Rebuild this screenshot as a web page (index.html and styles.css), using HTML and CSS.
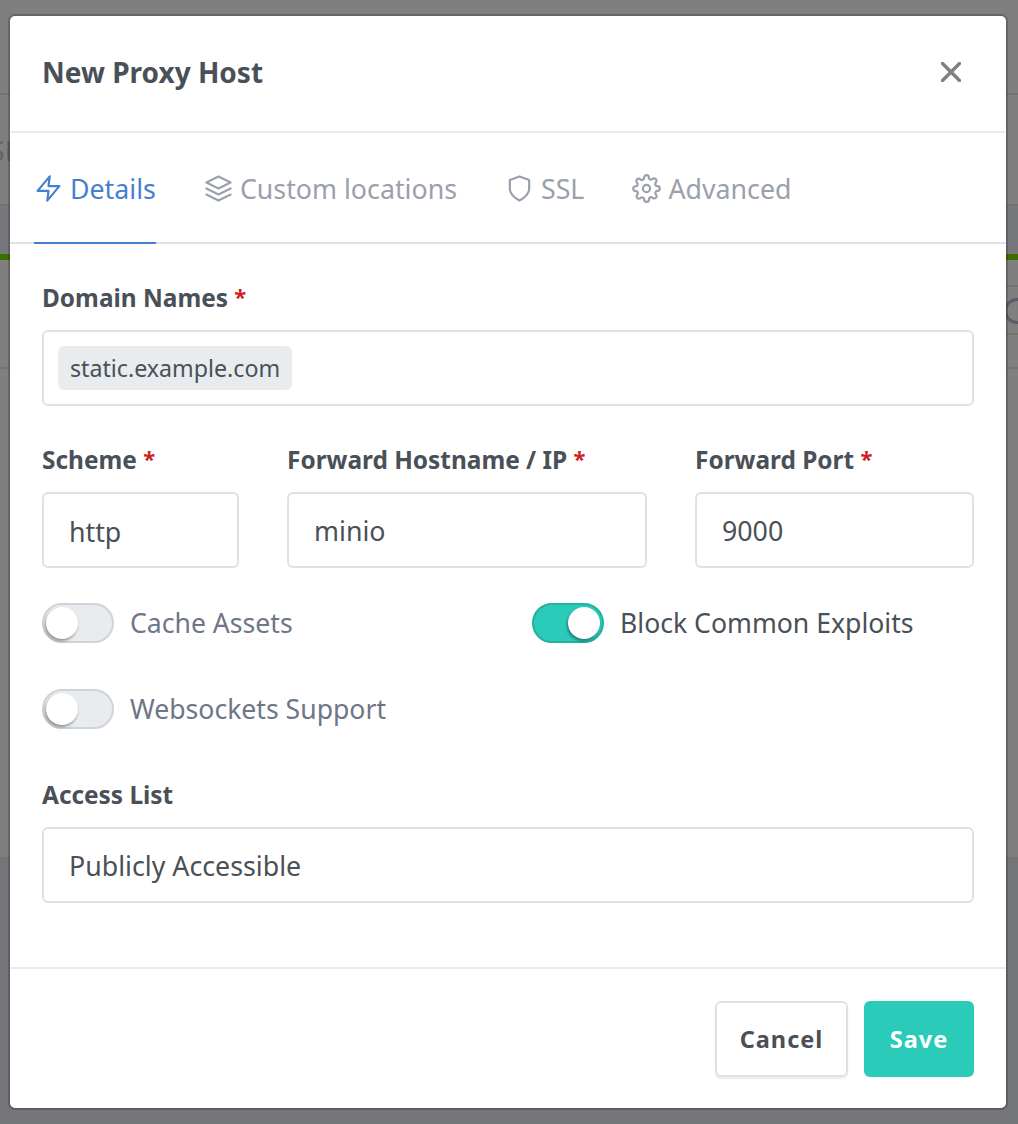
FILE: index.html
```html
<!DOCTYPE html>
<html lang="en">
<head>
    <meta charset="UTF-8">
    <title>New Proxy Host</title>
    <link rel="stylesheet" href="styles.css">
</head>
<body>
    <div class="page">
        <div class="page_row r1"><span class="page_text">SSL</span></div>
        <div class="page_row r2"></div>
        <div class="r3"></div>
        <div class="r4"></div>
        <div class="page_row r5"><span class="page_circle"></span></div>
        <div class="page_row r6"></div>
        <div class="page_row r7"></div>
        <div class="page_row r8"></div>
    </div>

    <div class="modal">
        <div class="modal_header">
            <h5>New Proxy Host</h5>
            <svg class="close" viewBox="0 0 20 20"><path d="M1.5 1.5l17 17M18.5 1.5l-17 17"/></svg>
        </div>

        <div class="tabs">
            <div class="tab active">
                <svg viewBox="0 0 24 24"><path d="M13 2L3 14h9l-1 8 10-12h-9l1-8z"/></svg>
                Details
            </div>
            <div class="tab">
                <svg viewBox="0 0 24 24"><path d="M12 2L2 7l10 5 10-5-10-5zM2 17l10 5 10-5M2 12l10 5 10-5"/></svg>
                Custom locations
            </div>
            <div class="tab">
                <svg viewBox="0 0 24 24"><path d="M12 22s8-4 8-10V5l-8-3-8 3v7c0 6 8 10 8 10z"/></svg>
                SSL
            </div>
            <div class="tab">
                <svg viewBox="0 0 24 24"><circle cx="12" cy="12" r="3"/><path d="M19.4 15a1.65 1.65 0 0 0 .33 1.82l.06.06a2 2 0 1 1-2.83 2.83l-.06-.06a1.65 1.65 0 0 0-2.82 1.17V21a2 2 0 1 1-4 0v-.09a1.65 1.65 0 0 0-2.82-1.11l-.06.06a2 2 0 1 1-2.83-2.83l.06-.06a1.65 1.65 0 0 0-1.17-2.82H3a2 2 0 1 1 0-4h.09a1.65 1.65 0 0 0 1.11-2.82l-.06-.06a2 2 0 1 1 2.83-2.83l.06.06a1.65 1.65 0 0 0 1.82.33H9a1.65 1.65 0 0 0 1-1.51V3a2 2 0 1 1 4 0v.09a1.65 1.65 0 0 0 2.82 1.11l.06-.06a2 2 0 1 1 2.83 2.83l-.06.06a1.65 1.65 0 0 0-.33 1.82V9c.26.6.85 1 1.51 1H21a2 2 0 1 1 0 4h-.09c-.66 0-1.25.4-1.51 1z"/></svg>
                Advanced
            </div>
        </div>

        <div class="modal_body">
            <div class="field domain">
                <label>Domain Names <span class="req">*</span></label>
                <div class="inp"><span class="tag">static.example.com</span></div>
            </div>

            <div class="forward">
                <div class="field">
                    <label>Scheme <span class="req">*</span></label>
                    <div class="inp scheme_val">http</div>
                </div>
                <div class="field">
                    <label>Forward Hostname / IP <span class="req">*</span></label>
                    <div class="inp">minio</div>
                </div>
                <div class="field">
                    <label>Forward Port <span class="req">*</span></label>
                    <div class="inp">9000</div>
                </div>
            </div>

            <div class="toggles">
                <div class="toggle"><span class="switch"></span>Cache Assets</div>
                <div class="toggle on"><span class="switch"></span>Block Common Exploits</div>
                <div class="toggle"><span class="switch"></span>Websockets Support</div>
            </div>

            <div class="field">
                <label>Access List</label>
                <div class="inp">Publicly Accessible</div>
            </div>
        </div>

        <div class="modal_footer">
            <div class="btn cancel">Cancel</div>
            <div class="btn save">Save</div>
        </div>
    </div>
</body>
</html>
```

FILE: styles.css
```css
* {
  box-sizing: border-box;
  font-family: "Noto Sans", sans-serif;
}
body {
  margin: 0;
  height: 1124px;
  overflow: hidden;
  background: #7f7f7f;
}

/* page behind the backdrop, only the edges show */
.page {
  height: 1124px;
  padding-top: 93px;
  display: flex;
  flex-direction: column;
}
.page_row {
  border-top: 2px solid #737373;
}
.r1 {
  height: 111px;
  padding-top: 38px;
}
.r2 {
  height: 50px;
  background: #76787c;
}
.r3 {
  height: 6px;
  background: #3f6f00;
}
.r4 {
  height: 25px;
}
.r5 {
  height: 50px;
  margin-left: 900px;
  position: relative;
  border-bottom: 2px solid #737373;
}
.r6 {
  height: 32px;
  border-top: 0;
}
.r7 {
  height: 490px;
}
.r8 {
  flex: 1;
  background: #757679;
}
.page_text {
  display: block;
  margin-left: -25px;
  color: #5f6368;
  font-size: 27px;
  line-height: 36px;
}
.page_circle {
  position: absolute;
  left: 104px;
  top: 11px;
  width: 26px;
  height: 26px;
  border: 3px solid #5a5c66;
  border-radius: 50%;
}

.modal {
  position: absolute;
  top: 16px;
  left: 10px;
  width: 996px;
  height: 1092px;
  background: #fff;
  border-radius: 5px;
  box-shadow: 0 0 0 2px rgba(0, 0, 0, 0.2);
  display: flex;
  flex-direction: column;
  color: #495057;
}
.modal_header {
  height: 117px;
  padding: 0 45px 3px 32px;
  display: flex;
  align-items: center;
  justify-content: space-between;
  border-bottom: 2px solid #e9ecef;
}
.modal_header h5 {
  margin: 0;
  font-size: 28px;
  font-weight: 700;
}
.close {
  width: 20px;
  height: 20px;
  fill: none;
  stroke: #7f7f7f;
  stroke-width: 3.4;
  stroke-linecap: round;
}

.tabs {
  height: 111px;
  padding: 0 24px;
  display: flex;
  gap: 48px;
  border-bottom: 2px solid #dee2e6;
}
.tab {
  height: 111px;
  padding-top: 1px;
  display: flex;
  align-items: center;
  gap: 7px;
  font-size: 26.75px;
  color: #9aa0ac;
  border-bottom: 2px solid transparent;
}
.tab svg {
  width: 29px;
  height: 29px;
  fill: none;
  stroke: currentColor;
  stroke-width: 1.8;
  stroke-linecap: round;
  stroke-linejoin: round;
}
.tab.active {
  color: #467fcf;
  border-bottom-color: #467fcf;
}

.modal_body {
  flex: 1;
  padding: 38px 32px 0 32px;
}
.field label {
  display: block;
  margin-bottom: 16px;
  font-size: 24.4px;
  font-weight: 700;
  line-height: 32px;
}
.req {
  color: #cd201f;
  font-size: 22px;
  line-height: 0;
  vertical-align: 2px;
}
.inp {
  height: 76px;
  padding: 0 25px;
  display: flex;
  align-items: center;
  border: 2px solid #dee2e6;
  border-radius: 6px;
  font-size: 26.75px;
}
.scheme_val {
  padding-top: 3px;
}
.domain .inp {
  padding: 0 14px;
}
.tag {
  padding: 0 12px;
  height: 44px;
  display: flex;
  align-items: center;
  background: #e9ecef;
  border-radius: 6px;
  font-size: 23.2px;
}
.domain {
  margin-bottom: 38px;
}
.forward {
  display: grid;
  grid-template-columns: 197px 360px 279px;
  gap: 48px;
  margin-bottom: 35px;
}
.toggles {
  display: grid;
  grid-template-columns: 490px 1fr;
  row-gap: 46px;
  margin-bottom: 50px;
}
.toggle {
  height: 40px;
  display: flex;
  align-items: center;
  gap: 16px;
  font-size: 26.6px;
  color: #6e7687;
}
.toggle.on {
  color: #495057;
}
.switch {
  width: 72px;
  height: 40px;
  position: relative;
  background: #e9ecef;
  border: 2px solid #ced4da;
  border-radius: 20px;
}
.switch:before {
  content: "";
  position: absolute;
  top: 2px;
  left: 2px;
  width: 32px;
  height: 32px;
  background: #fff;
  border-radius: 50%;
  box-shadow: -1px 2px 3px rgba(0, 0, 0, 0.4);
}
.toggle.on .switch {
  background: #2bcbba;
  border-color: #24b0a2;
}
.toggle.on .switch:before {
  left: 34px;
}

.modal_footer {
  height: 141px;
  padding: 32px 32px 0 0;
  display: flex;
  justify-content: flex-end;
  gap: 16px;
  border-top: 2px solid #e9ecef;
}
.btn {
  height: 76px;
  display: flex;
  align-items: center;
  justify-content: center;
  border-radius: 6px;
  font-size: 23.5px;
  font-weight: 700;
  letter-spacing: 1px;
}
.cancel {
  width: 133px;
  border: 2px solid #dee2e6;
  box-shadow: 0 2px 2px rgba(0, 0, 0, 0.08);
}
.save {
  width: 110px;
  background: #2bcbba;
  color: #fff;
}
```
